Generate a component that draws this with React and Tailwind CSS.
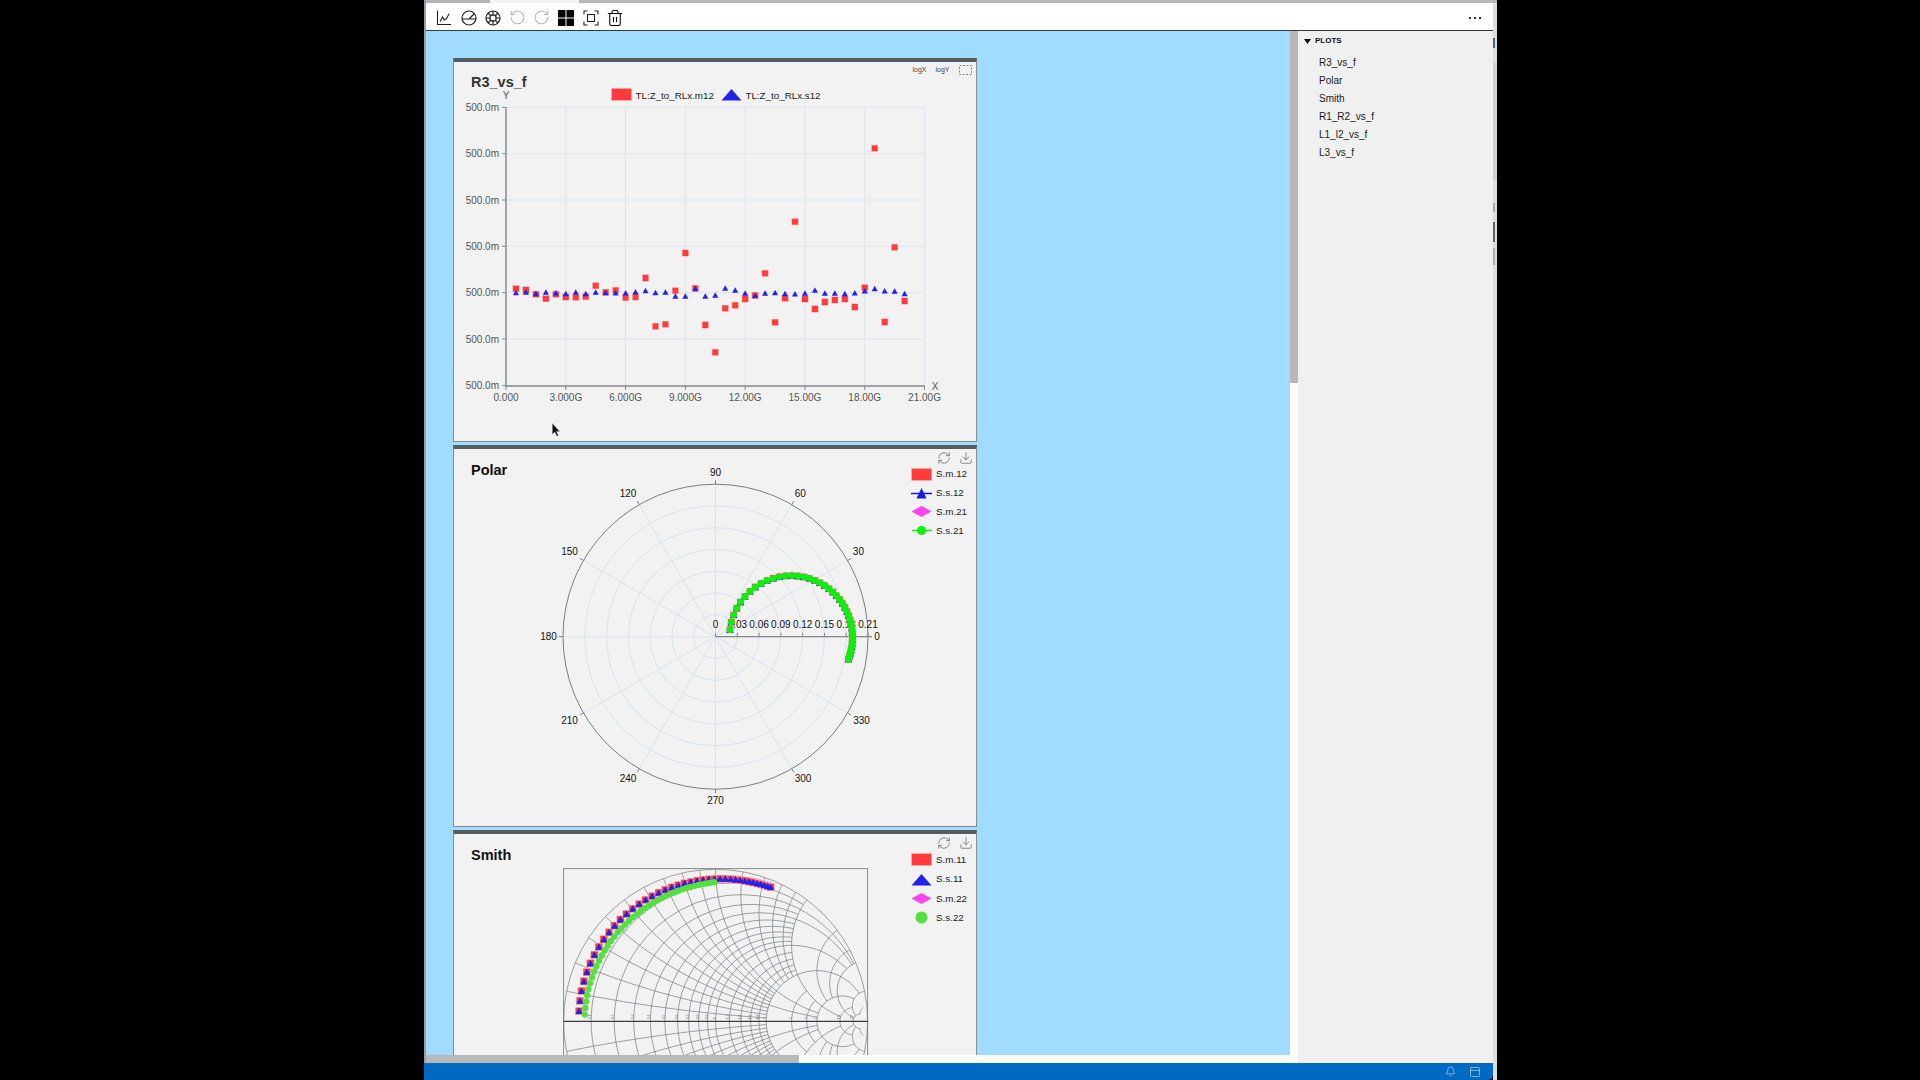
import { Bell, Download, PanelTop, RefreshCw, RotateCcw, RotateCw, Trash2 } from 'lucide-react'

const FONT = "'Liberation Sans', Arial, sans-serif"

const redYs = [686, 690, 703, 716, 703, 711, 712, 710, 677, 697, 691, 713, 711, 654, 799, 793, 692, 579, 685, 795, 877, 745, 736, 717, 706, 640, 787, 715, 485, 717, 747, 726, 720, 717, 741, 683, 265, 786, 562, 723]
const blueYs = [698, 697, 701, 697, 699, 701, 697, 701, 697, 698, 699, 699, 696, 692, 698, 697, 709, 709, 686, 709, 706, 685, 691, 700, 707, 700, 698, 701, 702, 700, 691, 700, 700, 701, 699, 693, 686, 693, 694, 701]

const range = (n) => Array.from({ length: n }, (_, i) => i)
const rad = (deg) => (deg * Math.PI) / 180

function Square({ x, y, size = 7, fill = '#ff3b3b' }) {
  return <rect x={x - size / 2} y={y - size / 2} width={size} height={size} fill={fill} stroke="#f7c9c9" strokeWidth="0.5" />
}

function Triangle({ x, y, size = 7, fill = '#2222ee' }) {
  return <polygon points={`${x},${y - size * 0.55} ${x + size * 0.55},${y + size * 0.45} ${x - size * 0.55},${y + size * 0.45}`} fill={fill} />
}

function LegendText({ children }) {
  return <span className="text-[9.8px] leading-none text-[#222]">{children}</span>
}

function Swatch({ kind }) {
  return (
    <svg width="21" height="13" viewBox="0 0 21 13" className="block shrink-0">
      {kind === 'square' && <rect x="0.5" y="0.5" width="20" height="12" fill="#ff3b3b" stroke="#f5b5b5" strokeWidth="0.5" />}
      {kind === 'triangle' && <polygon points="10.5,1 20.5,12.5 0.5,12.5" fill="#2222ee" />}
      {kind === 'diamond' && <polygon points="10.5,1 20.5,6.5 10.5,12 0.5,6.5" fill="#ff44ee" />}
      {kind === 'circle' && <circle cx="10.5" cy="6.5" r="6" fill="#55e040" />}
      {kind === 'lineStar' && (
        <>
          <path d="M0 6.5h21" stroke="#1a1ae6" strokeWidth="1.5" />
          <polygon points="10.5,1 15.5,11.5 5.5,11.5" fill="#1a1ae6" />
        </>
      )}
      {kind === 'lineCircle' && (
        <>
          <path d="M1 6.5h20" stroke="#0cf00c" strokeWidth="1.5" />
          <circle cx="10.5" cy="6.5" r="4.5" fill="#0cf00c" />
        </>
      )}
    </svg>
  )
}

function SideLegend({ rows, top, rowHeight }) {
  return (
    <div className={`absolute left-[457px] flex flex-col ${top}`}>
      {rows.map(([kind, label]) => (
        <div key={label} className={`flex items-center gap-[4px] ${rowHeight}`}>
          <Swatch kind={kind} />
          <LegendText>{label}</LegendText>
        </div>
      ))}
    </div>
  )
}

function CardTools() {
  return (
    <div className="absolute left-[483px] top-[2px] flex gap-[8px] text-[#6a6a6a]">
      <RefreshCw size={14} strokeWidth={1.3} />
      <Download size={14} strokeWidth={1.3} />
    </div>
  )
}

function R3Chart() {
  const xPos = (g) => 506 + g * 19.93
  const yTicks = [107.3, 153.7, 200, 246.3, 292.7, 339, 385.7]
  const xLabels = ['0.000', '3.000G', '6.000G', '9.000G', '12.00G', '15.00G', '18.00G', '21.00G']
  return (
    <svg width="522" height="379" viewBox="454 62 522 379" className="block" style={{ fontFamily: FONT }}>
      {yTicks.map((y) => (
        <path key={y} d={`M506 ${y}H925`} stroke="#dbe4ef" strokeWidth="1" />
      ))}
      {xLabels.map((_, i) => (
        <path key={i} d={`M${xPos(i * 3)} 107V386`} stroke="#dbe4ef" strokeWidth="1" />
      ))}
      <path d="M506 107V386H925" fill="none" stroke="#85898d" strokeWidth="1.4" />
      {yTicks.map((y) => (
        <g key={y}>
          <path d={`M502 ${y}H506`} stroke="#85898d" />
          <text x="499" y={y + 3.5} textAnchor="end" fontSize="10" fill="#555">500.0m</text>
        </g>
      ))}
      {xLabels.map((label, i) => (
        <g key={label}>
          <path d={`M${xPos(i * 3)} 386v4`} stroke="#85898d" />
          <text x={xPos(i * 3)} y="400.5" textAnchor="middle" fontSize="10" fill="#555">{label}</text>
        </g>
      ))}
      <text x="506" y="98.5" textAnchor="middle" fontSize="10" fill="#555">Y</text>
      <text x="935" y="389.5" textAnchor="middle" fontSize="10" fill="#555">X</text>
      {redYs.map((y, i) => (
        <Square key={i} x={xPos((i + 1) * 0.5)} y={y / 3 + 60} size={6.5} />
      ))}
      {blueYs.map((y, i) => (
        <Triangle key={i} x={xPos((i + 1) * 0.5)} y={y / 3 + 60} size={5.5} />
      ))}
      <path d="M552.3 423.3v11.2l2.5-2.4 2 4.1 1.6-.8-2-3.9h3.4z" fill="#111" stroke="#eee" strokeWidth="0.3" />
    </svg>
  )
}

const polarLabels = [
  ['90', 0, -164], ['120', -87.5, -142.4], ['60', 84.7, -142.4], ['150', -146, -84.4], ['30', 142.9, -84.4],
  ['180', -167, 0], ['0', 161.5, 0], ['210', -146, 84.3], ['330', 146, 84.3], ['240', -87.5, 142.3],
  ['300', 87.5, 142.3], ['270', 0, 164],
]

function PolarChart() {
  const cx = 715.5
  const cy = 635.7
  const R = 152.5
  const step = R / 7
  const arc = range(40).map((i) => {
    const u = i / 39
    const a = rad(173 - 40 * (7 * u - 2.15 * u * u))
    return { x: cx + 75.5 + 61.5 * Math.cos(a), y: cy + 0.5 - 61.5 * Math.sin(a) }
  })
  return (
    <svg width="522" height="378" viewBox="454 448 522 378" className="block" style={{ fontFamily: FONT }}>
      {range(6).map((i) => (
        <circle key={i} cx={cx} cy={cy} r={step * (i + 1)} fill="none" stroke="#d8e3ef" strokeWidth="1" />
      ))}
      {range(12).map((i) => (
        <path key={i} d={`M${cx} ${cy}L${cx + R * Math.cos(rad(i * 30))} ${cy - R * Math.sin(rad(i * 30))}`} stroke="#d8e3ef" strokeWidth="1" />
      ))}
      <circle cx={cx} cy={cy} r={R} fill="none" stroke="#7d7d82" strokeWidth="1" />
      {range(12).map((i) => (
        <path
          key={i}
          d={`M${cx + R * Math.cos(rad(i * 30))} ${cy - R * Math.sin(rad(i * 30))}L${cx + (R + 4) * Math.cos(rad(i * 30))} ${cy - (R + 4) * Math.sin(rad(i * 30))}`}
          stroke="#7d7d82"
          strokeWidth="1"
        />
      ))}
      <path d={`M${cx} ${cy}H${cx + 156}`} stroke="#85898d" strokeWidth="1.2" />
      {['0', '0.03', '0.06', '0.09', '0.12', '0.15', '0.18', '0.21'].map((label, i) => (
        <g key={label}>
          <path d={`M${cx + step * i} ${cy}v-4`} stroke="#85898d" strokeWidth="1" />
          <text x={cx + step * i} y={cy - 8.6} textAnchor="middle" fontSize="10" fill="#111">{label}</text>
        </g>
      ))}
      {polarLabels.map(([label, dx, dy]) => (
        <text key={label} x={cx + dx} y={cy + dy + 3} textAnchor="middle" fontSize="10" fill="#111">{label}</text>
      ))}
      {arc.map((p, i) => (
        <Square key={`r${i}`} x={p.x} y={p.y} size={6.8} />
      ))}
      {arc.map((p, i) => (
        <Triangle key={`b${i}`} x={p.x} y={p.y} size={6.8} />
      ))}
      {arc.map((p, i) => (
        <circle key={`g${i}`} cx={p.x} cy={p.y} r="3.4" fill="#0cf00c" />
      ))}
    </svg>
  )
}

const SX = 715.6
const SY = 1020.3
const SR = 152

function gamma(r, x) {
  const d = (r + 1) * (r + 1) + x * x
  return [SX + (SR * (r * r - 1 + x * x)) / d, SY - (SR * 2 * x) / d]
}

function toPath(points) {
  return points.map((p, i) => `${i ? 'L' : 'M'}${p[0].toFixed(2)} ${p[1].toFixed(2)}`).join('')
}

function rArc(r, xMax) {
  return toPath(range(81).map((i) => {
    const t = i / 40 - 1
    return gamma(r, xMax * t * t * t)
  }))
}

function xArc(x, r0, r1) {
  return toPath(range(51).map((i) => {
    const t = i / 50
    return gamma(r0 + (r1 - r0) * t * t, x)
  }))
}

const rCircles = [
  [0.1, 2], [0.2, 5], [0.3, 2], [0.4, 5], [0.5, 2], [0.6, 2], [0.7, 2], [0.8, 2], [0.9, 2], [1, 5],
  [1.2, 2], [1.4, 2], [1.6, 2], [1.8, 2], [2, 10], [3, 2], [4, 2], [5, 10], [10, 10], [20, 20],
]
const xArcs = [
  [0.1, 2], [0.2, 2], [0.3, 2], [0.4, 2], [0.5, 5], [0.6, 2], [0.7, 2], [0.8, 2], [0.9, 2], [1, 5],
  [1.2, 2], [1.4, 2], [1.6, 2], [1.8, 2], [2, 10], [3, 5], [4, 5], [5, 20], [10, 20],
]

function SmithChart() {
  const red = range(40).map((i) => {
    const u = i / 39
    const a = rad(175.7 - 40 * (4.2 * u - 1.5 * u * u))
    const m = 137 + 8 * u
    return { x: SX + m * Math.cos(a), y: SY - m * Math.sin(a) }
  })
  const green = range(40).map((i) => {
    const u = i / 39
    const a = rad(177 - 40 * (2.8 * u - 0.64 * u * u))
    const m = 131 + 8 * u * u
    return { x: SX + m * Math.cos(a), y: SY - m * Math.sin(a) }
  })
  return (
    <svg width="522" height="240" viewBox="454 833 522 240" className="block" style={{ fontFamily: FONT }}>
      <rect x="563.6" y="867.6" width="304" height="304" fill="none" stroke="#8a8a8a" strokeWidth="1" />
      <g fill="none" stroke="#77797c" strokeWidth="0.7">
        <circle cx={SX} cy={SY} r={SR} />
        {rCircles.map(([r, xMax]) => (
          <path key={r} d={rArc(r, xMax)} />
        ))}
        {xArcs.map(([x, r1]) => (
          <g key={x}>
            <path d={xArc(x, 0, r1)} />
            <path d={xArc(-x, 0, r1)} />
          </g>
        ))}
        <path d={xArc(20, 5, 20)} />
        <path d={xArc(-20, 5, 20)} />
      </g>
      <path d={`M563.6 ${SY}H867.6`} stroke="#111" strokeWidth="1" />
      {rCircles.map(([r]) => {
        const px = gamma(r, 0)[0]
        return (
          <text key={r} x={px} y={SY - 2} fontSize="3.5" fill="#666" textAnchor="start" transform={`rotate(-90 ${px} ${SY - 2})`}>
            {r}
          </text>
        )
      })}
      {red.map((p, i) => (
        <Square key={`r${i}`} x={p.x} y={p.y} size={7.5} />
      ))}
      {red.map((p, i) => (
        <Triangle key={`b${i}`} x={p.x} y={p.y} size={6.5} />
      ))}
      {green.map((p, i) => (
        <circle key={`g${i}`} cx={p.x} cy={p.y} r="3.2" fill="#55e040" />
      ))}
    </svg>
  )
}

function ToolIcon({ children }) {
  return <div className="flex w-[24.4px] items-center justify-center text-[#222]">{children}</div>
}

function Toolbar() {
  return (
    <div className="flex h-[28px] shrink-0 items-center justify-between border-b border-[#3a3a3a] bg-white pl-[6px] pr-[12px] pt-[2px]">
      <div className="flex items-center">
        <ToolIcon>
          <svg width="16" height="16" viewBox="0 0 16 16" fill="none" stroke="currentColor" strokeWidth="1.1">
            <path d="M1.5 0.5V14.5H15" />
            <path d="M4 11.5l2.6-4.5 1.6 3 2-1.2 3-5" />
          </svg>
        </ToolIcon>
        <ToolIcon>
          <svg width="16" height="16" viewBox="0 0 16 16" fill="none" stroke="currentColor" strokeWidth="1.2">
            <circle cx="8" cy="8" r="7" />
            <path d="M1 9H15M8 9L13.5 3.5" />
          </svg>
        </ToolIcon>
        <ToolIcon>
          <svg width="16" height="16" viewBox="0 0 16 16" fill="none" stroke="currentColor" strokeWidth="1.2">
            <circle cx="8" cy="8" r="7" />
            <circle cx="8" cy="8" r="3.2" />
            <path d="M1 8h4.8M10.2 8H15M8 1v4.8M8 10.2V15M3 3l3 3M13 3l-3 3M3 13l3-3M13 13l-3-3" />
          </svg>
        </ToolIcon>
        <ToolIcon>
          <RotateCcw size={17} strokeWidth={1.3} className="text-[#a8a8a8]" />
        </ToolIcon>
        <ToolIcon>
          <RotateCw size={17} strokeWidth={1.3} className="text-[#a8a8a8]" />
        </ToolIcon>
        <ToolIcon>
          <svg width="16" height="16" viewBox="0 0 16 16" className="text-black" fill="currentColor">
            <rect x="0" y="0" width="7.5" height="7.5" />
            <rect x="8.5" y="0" width="7.5" height="7.5" />
            <rect x="0" y="8.5" width="7.5" height="7.5" />
            <rect x="8.5" y="8.5" width="7.5" height="7.5" />
          </svg>
        </ToolIcon>
        <ToolIcon>
          <svg width="16" height="16" viewBox="0 0 16 16" fill="none" stroke="currentColor" strokeWidth="1.1">
            <path d="M1 4.5V1H4.5M11.5 1H15V4.5M15 11.5V15H11.5M4.5 15H1V11.5" />
            <rect x="4.5" y="4.5" width="7" height="7" />
          </svg>
        </ToolIcon>
        <ToolIcon>
          <Trash2 size={18} strokeWidth={1.4} className="text-black" />
        </ToolIcon>
      </div>
      <div className="flex gap-[3.2px]">
        <div className="size-[2px] bg-[#333]" />
        <div className="size-[2px] bg-[#333]" />
        <div className="size-[2px] bg-[#333]" />
      </div>
    </div>
  )
}

function Sidebar() {
  const items = ['R3_vs_f', 'Polar', 'Smith', 'R1_R2_vs_f', 'L1_l2_vs_f', 'L3_vs_f']
  return (
    <div className="min-w-0 flex-1 bg-[#f0f0f0]">
      <div className="flex h-[20px] items-center gap-[4px] pl-[6px]">
        <svg width="7" height="5" viewBox="0 0 7 5" className="block">
          <polygon points="0,0 7,0 3.5,5" fill="#111" />
        </svg>
        <span className="text-[8px] font-bold text-[#111]">PLOTS</span>
      </div>
      <ul className="mt-[3px] pl-[21px]">
        {items.map((item) => (
          <li key={item} className="flex h-[17.9px] items-center text-[10px] text-[#1a1a1a]">{item}</li>
        ))}
      </ul>
    </div>
  )
}

export default function App() {
  return (
    <div className="flex h-screen w-full overflow-hidden bg-black pl-[424px]" style={{ fontFamily: FONT }}>
      <div className="flex h-full w-[1069px] flex-col border-l-2 border-[#9a9ea2]">
        <div className="flex h-[3px] shrink-0 bg-[#dcdcdc]">
          <div className="w-[64px] bg-[#b4b4b4]" />
          <div className="flex-1 bg-[#f4f4f4]" />
          <div className="w-[914px] bg-[#b8b8b8]" />
        </div>
        <Toolbar />
        <div className="flex min-h-0 flex-1">
          <div className="flex w-[864px] flex-col bg-white">
            <div className="min-h-0 flex-1 overflow-hidden bg-[#9fdcff] pl-[27px] pt-[27px]">
              <section className="relative mb-[3px] h-[384px] w-[524px] border-x border-b border-t-4 border-x-[#858b90] border-b-[#858b90] border-t-[#555c62] bg-[#f2f2f2]">
                <R3Chart />
                <h2 className="absolute left-[17px] top-[12px] text-[14.5px] font-bold leading-4 text-[#333]">R3_vs_f</h2>
                <div className="absolute left-[157px] top-[25.5px] flex h-[13px] items-center leading-none">
                  <Swatch kind="square" />
                  <span className="ml-[3.5px] mr-[7px] leading-none"><LegendText>TL:Z_to_RLx.m12</LegendText></span>
                  <Swatch kind="triangle" />
                  <span className="ml-[3.5px] leading-none"><LegendText>TL:Z_to_RLx.s12</LegendText></span>
                </div>
                <span className="absolute left-[458.5px] top-[2.5px] text-[7px] text-[#444]">logX</span>
                <span className="absolute left-[481.5px] top-[2.5px] text-[7px] text-[#444]">logY</span>
                <svg width="13" height="10" viewBox="0 0 13 10" fill="none" stroke="#666" strokeWidth="0.8" strokeDasharray="2 1.5" className="absolute left-[505px] top-[3px]">
                  <rect x="0.5" y="0.5" width="12" height="9" />
                </svg>
              </section>
              <section className="relative mb-[3px] h-[382px] w-[524px] border-x border-b border-t-4 border-x-[#858b90] border-b-[#858b90] border-t-[#555c62] bg-[#f2f2f2]">
                <PolarChart />
                <h2 className="absolute left-[17px] top-[13px] text-[14.5px] font-bold leading-4 text-[#111]">Polar</h2>
                <CardTools />
                <SideLegend
                  top="top-[16px]"
                  rowHeight="h-[18.7px]"
                  rows={[['square', 'S.m.12'], ['lineStar', 'S.s.12'], ['diamond', 'S.m.21'], ['lineCircle', 'S.s.21']]}
                />
              </section>
              <section className="relative h-[300px] w-[524px] border-x border-t-4 border-x-[#858b90] border-t-[#555c62] bg-[#f2f2f2]">
                <SmithChart />
                <h2 className="absolute left-[17px] top-[12.5px] text-[14.5px] font-bold leading-4 text-[#111]">Smith</h2>
                <CardTools />
                <SideLegend
                  top="top-[16px]"
                  rowHeight="h-[19.4px]"
                  rows={[['square', 'S.m.11'], ['triangle', 'S.s.11'], ['diamond', 'S.m.22'], ['circle', 'S.s.22']]}
                />
              </section>
            </div>
            <div className="h-[8px] shrink-0 bg-white">
              <div className="h-full w-[373px] bg-[#b8b8b8]" />
            </div>
          </div>
          <div className="w-[8px] shrink-0 bg-white">
            <div className="h-[352px] bg-[#b8b8b8]" />
          </div>
          <Sidebar />
        </div>
        <div className="-ml-[2px] flex h-[17px] shrink-0 items-center justify-end gap-[13px] rounded-br-[5px] bg-[#0069c2] pr-[12px] text-[#d6e6f6]">
          <Bell size={11} strokeWidth={1.2} />
          <PanelTop size={12} strokeWidth={1.2} />
        </div>
      </div>
      <div className="flex h-full w-[4px] flex-col bg-[#dedede]">
        <div className="h-[3px] bg-[#b8b8b8]" />
        <div className="mt-[35px] h-[10px] w-[1.5px] bg-[#4a6488]" />
        <div className="mt-[15px] h-[117px] bg-[#d0d0d0]" />
        <div className="mt-[23px] h-[9px] w-[1.5px] bg-[#aaa]" />
        <div className="mt-[10px] h-[20px] w-[1.5px] bg-[#666]" />
        <div className="mt-[6px] h-[17px] w-[1.5px] bg-[#aaa]" />
      </div>
    </div>
  )
}
